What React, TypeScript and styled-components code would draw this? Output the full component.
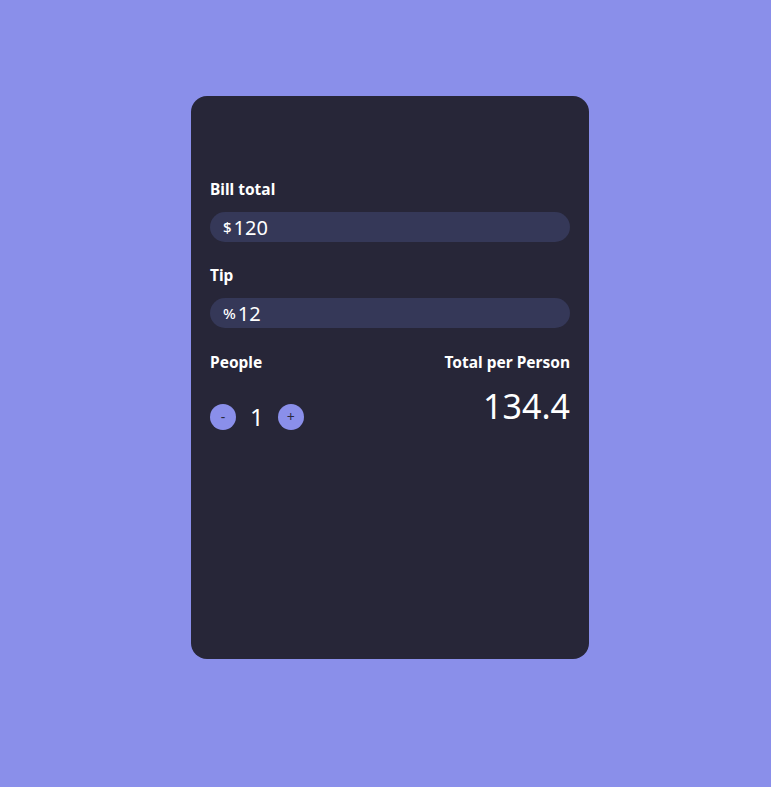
import React, { useState } from "react";
import styled, { createGlobalStyle } from "styled-components";

const Global = createGlobalStyle`
  html, body { margin: 0; padding: 0; background: #8a8fea; }
  body { font-family: "Noto Sans", "Open Sans", sans-serif; }
  * { box-sizing: border-box; }
`;

const Page = styled.div`
  min-height: 787px;
  padding: 96px 0 0 191px;
  display: flex;
  align-items: flex-start;
`;

const Card = styled.div`
  width: 398px;
  height: 563px;
  background: #272638;
  border-radius: 16px;
  padding: 83px 19px 0;
  display: flex;
  flex-direction: column;
`;

const Field = styled.div<{ $gap?: number }>`
  display: flex;
  flex-direction: column;
  margin-bottom: ${(p) => p.$gap ?? 0}px;
`;

const Label = styled.div`
  font-size: 15.5px;
  line-height: 20px;
  font-weight: 700;
  color: #ffffff;
`;

const InputWrap = styled.div`
  margin-top: 13px;
  height: 30px;
  background: #353858;
  border-radius: 15px;
  display: flex;
  align-items: center;
  padding-left: 13px;
  color: #ffffff;
`;

const Prefix = styled.span`
  font-size: 15px;
  font-weight: 500;
  margin-right: 2px;
`;

const Value = styled.span`
  font-size: 20px;
`;

const Bottom = styled.div`
  display: flex;
  justify-content: space-between;
`;

const Col = styled.div<{ $right?: boolean }>`
  display: flex;
  flex-direction: column;
  align-items: ${(p) => (p.$right ? "flex-end" : "flex-start")};
`;

const Controls = styled.div`
  margin-top: 30px;
  display: flex;
  align-items: center;
  gap: 14px;
`;

const Round = styled.button`
  width: 26px;
  height: 26px;
  border-radius: 50%;
  border: none;
  background: #8a8fea;
  color: #2a2a40;
  font-family: "Noto Sans", sans-serif;
  font-size: 14px;
  line-height: 26px;
  padding: 0;
  display: flex;
  align-items: center;
  justify-content: center;
  cursor: pointer;
`;

const Count = styled.span`
  font-size: 24px;
  color: #ffffff;
  line-height: 30px;
  min-width: 13px;
  text-align: center;
`;

const Result = styled.div`
  margin-top: 14px;
  font-size: 34px;
  line-height: 40px;
  color: #ffffff;
`;

export default function App() {
  const [people, setPeople] = useState(1);
  const bill = 120;
  const tip = 12;
  const per = Math.round(((bill * (1 + tip / 100)) / people) * 100) / 100;
  return (
    <>
      <Global />
      <Page>
        <Card>
          <Field $gap={23}>
            <Label>Bill total</Label>
            <InputWrap>
              <Prefix>$</Prefix>
              <Value>{bill}</Value>
            </InputWrap>
          </Field>
          <Field $gap={24}>
            <Label>Tip</Label>
            <InputWrap>
              <Prefix>%</Prefix>
              <Value>{tip}</Value>
            </InputWrap>
          </Field>
          <Bottom>
            <Col>
              <Label>People</Label>
              <Controls>
                <Round onClick={() => setPeople((n) => Math.max(1, n - 1))}>-</Round>
                <Count>{people}</Count>
                <Round onClick={() => setPeople((n) => n + 1)}>+</Round>
              </Controls>
            </Col>
            <Col $right>
              <Label>Total per Person</Label>
              <Result>{per}</Result>
            </Col>
          </Bottom>
        </Card>
      </Page>
    </>
  );
}
